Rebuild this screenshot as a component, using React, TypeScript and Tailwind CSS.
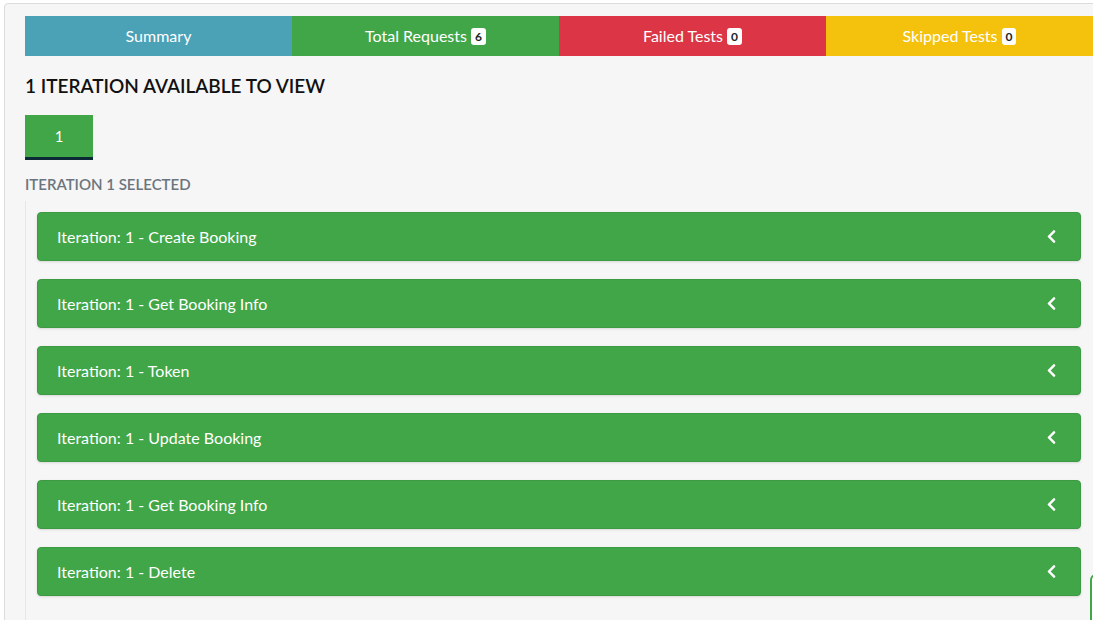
const tabs = [
  { label: 'Summary', bg: 'bg-[#4ba1b6]' },
  { label: 'Total Requests', bg: 'bg-[#41a648]', count: 6 },
  { label: 'Failed Tests', bg: 'bg-[#dc3646]', count: 0 },
  { label: 'Skipped Tests', bg: 'bg-[#f4c20d]', count: 0 },
];

const requests = [
  'Create Booking',
  'Get Booking Info',
  'Token',
  'Update Booking',
  'Get Booking Info',
  'Delete',
];

function ChevronLeft() {
  return (
    <svg viewBox="0 0 320 512" className="w-[11px] h-[15px] fill-white">
      <path d="M34.52 239.03L228.87 44.69c9.37-9.37 24.57-9.37 33.94 0l22.67 22.67c9.36 9.36 9.37 24.52.04 33.9L131.49 256l154.02 154.75c9.34 9.38 9.32 24.54-.04 33.9l-22.67 22.670c-9.37 9.37-24.57 9.37-33.94 0L34.52 272.97c-9.37-9.37-9.37-24.57 0-33.94z" />
    </svg>
  );
}

export default function App() {
  return (
    <div
      className="relative h-[620px] overflow-hidden bg-white"
      style={{ fontFamily: 'Lato, "Open Sans", sans-serif' }}
    >
      <div className="ml-[4px] mt-[3px] w-[1120px] h-[640px] rounded-[4px] border border-[#dcdcdc] bg-[#f6f6f6] pl-[20px] pt-[12px]">
        <div className="grid grid-cols-4 w-[1068px] h-[40px]">
          {tabs.map((tab) => (
            <div
              key={tab.label}
              className={`${tab.bg} flex items-center justify-center gap-[4px] text-white text-[16px]`}
            >
              <span>{tab.label}</span>
              {tab.count !== undefined && (
                <span className="bg-white text-[#212529] text-[12px] font-bold rounded-[3px] px-[4px] h-[17px] leading-[17px] mt-[1px]">
                  {tab.count}
                </span>
              )}
            </div>
          ))}
        </div>

        <h4 className="mt-[18px] text-[19px] font-semibold text-[#111] leading-[23px]">
          1 ITERATION AVAILABLE TO VIEW
        </h4>

        <div className="mt-[18px] w-[68px] h-[45px] bg-[#41a648] border-b-[3px] border-[#0c2a36] flex items-center justify-center text-white text-[15px]">
          1
        </div>

        <div className="mt-[15px] text-[15px] font-semibold text-[#6c757d] leading-[18px]">
          ITERATION 1 SELECTED
        </div>

        <div className="mt-[8px] w-[1056px] border-l border-[#e6e6e6] pl-[11px] pt-[11px] pb-[40px] flex flex-col gap-[18px]">
          {requests.map((name, i) => (
            <div
              key={i}
              className="h-[49px] rounded-[4px] border border-[#3c9a43] bg-[#41a648] shadow-sm flex items-center justify-between pl-[19px] pr-[23px] text-white text-[16px]"
            >
              <span>Iteration: 1 - {name}</span>
              <ChevronLeft />
            </div>
          ))}
        </div>
      </div>

      <div className="absolute left-[1090px] top-[574px] w-[40px] h-[60px] rounded-[6px] border-2 border-[#41a648] bg-white" />
    </div>
  );
}
